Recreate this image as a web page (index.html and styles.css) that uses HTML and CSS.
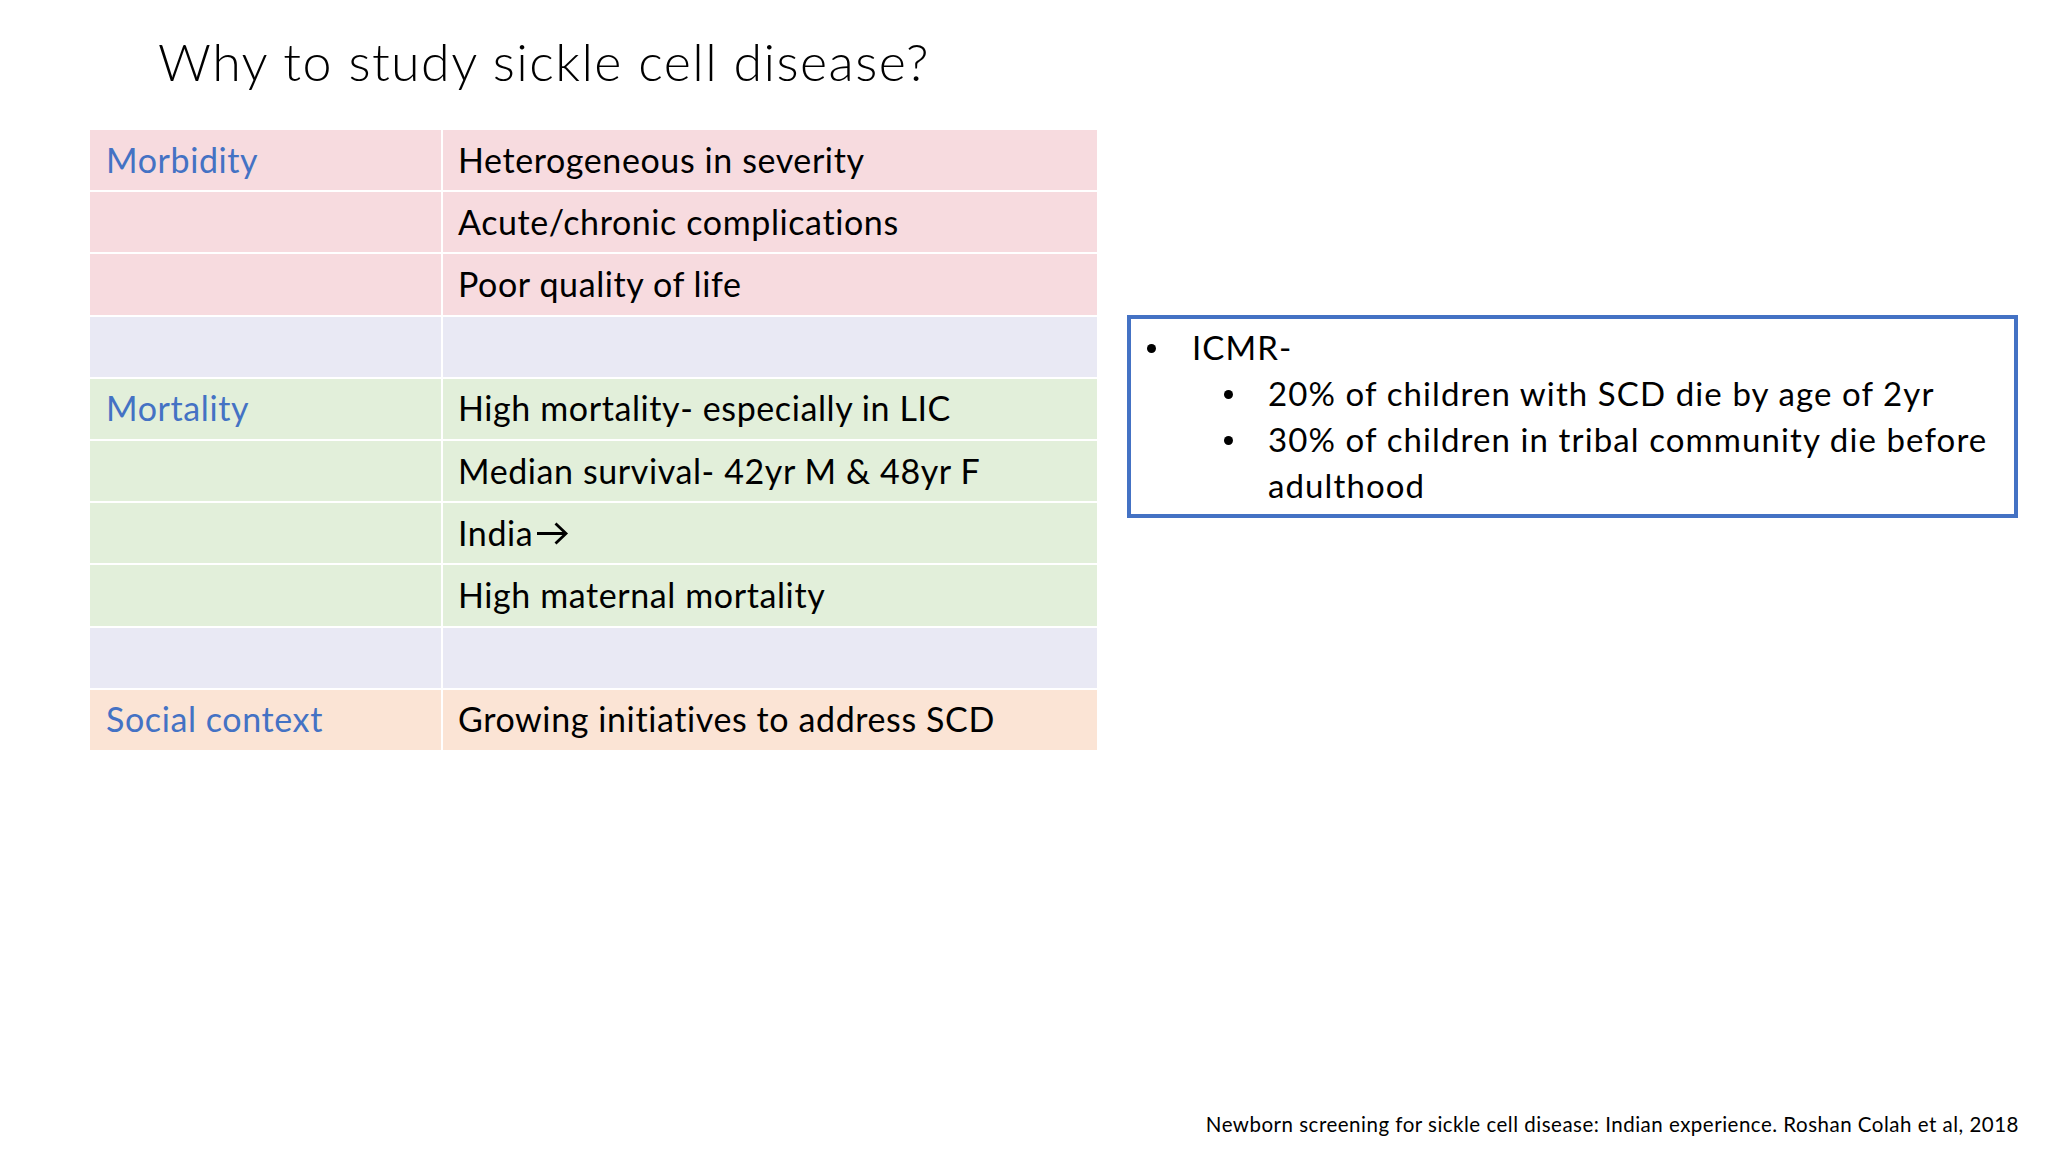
FILE: index.html
```html
<!DOCTYPE html>
<html lang="en">
<head>
<meta charset="utf-8">
<title>Why to study sickle cell disease?</title>
<link rel="stylesheet" href="styles.css">
</head>
<body>
<div class="slide">
  <h1 class="title">Why to study sickle cell disease?</h1>
  <div class="content">
    <div class="table">
      <div class="cell pink label">Morbidity</div>
      <div class="cell pink">Heterogeneous in severity</div>
      <div class="cell pink label"></div>
      <div class="cell pink">Acute/chronic complications</div>
      <div class="cell pink label"></div>
      <div class="cell pink">Poor quality of life</div>
      <div class="cell lav label"></div>
      <div class="cell lav"></div>
      <div class="cell green label">Mortality</div>
      <div class="cell green">High mortality- especially in LIC</div>
      <div class="cell green label"></div>
      <div class="cell green">Median survival- 42yr M &amp; 48yr F</div>
      <div class="cell green label"></div>
      <div class="cell green">India<svg class="arrow" width="33" height="23" viewBox="0 0 33 23" aria-hidden="true"><path d="M1 11.5H30M19.5 1.5L30 11.5L19.5 21.5" fill="none" stroke="#000" stroke-width="2.8"/></svg></div>
      <div class="cell green label"></div>
      <div class="cell green">High maternal mortality</div>
      <div class="cell lav label"></div>
      <div class="cell lav"></div>
      <div class="cell peach label">Social context</div>
      <div class="cell peach">Growing initiatives to address SCD</div>
    </div>
    <div class="box">
      <ul class="list">
        <li class="item">ICMR-
          <ul class="sublist">
            <li class="subitem">20% of children with SCD die by age of 2yr</li>
            <li class="subitem">30% of children in tribal community die before<br>adulthood</li>
          </ul>
        </li>
      </ul>
    </div>
  </div>
  <div class="footer">Newborn screening for sickle cell disease: Indian experience. Roshan Colah et al, 2018</div>
</div>
</body>
</html>
```
FILE: styles.css
```css
* { box-sizing: border-box; }
html, body { margin: 0; padding: 0; background: #fff; }
body { font-family: Lato, "Open Sans", "Liberation Sans", sans-serif; color: #000; }

.slide {
  width: 2048px;
  height: 1152px;
  display: flex;
  flex-direction: column;
  background: #fff;
}

.title {
  margin: 0;
  padding: 31px 0 0 158px;
  font-size: 52px;
  font-weight: 300;
  line-height: 60px;
  height: 130px;
  letter-spacing: 1.4px;
}

.content {
  display: flex;
  align-items: flex-start;
  padding-left: 90px;
  gap: 30px;
}

.table {
  display: grid;
  grid-template-columns: 351px 654px;
  grid-auto-rows: 60.2px;
  gap: 2px;
  width: 1007px;
}

.cell {
  display: flex;
  align-items: center;
  padding: 0 0 2px 15px;
  font-size: 34px;
  letter-spacing: 0.6px;
  color: #000;
}
.cell.label { color: #4472c4; padding-left: 16px; }

.pink { background: #f7dbdf; }
.lav { background: #e9e9f4; }
.green { background: #e2efda; }
.peach { background: #fbe4d5; }

.arrow { margin-left: 3px; margin-top: 2px; }

.box {
  margin-top: 185px;
  width: 891px;
  height: 203px;
  border: 4px solid #4472c4;
  padding: 5px 0 0 0;
}

.list, .sublist { list-style: none; margin: 0; padding: 0; }
.item, .subitem {
  position: relative;
  font-size: 33px;
  letter-spacing: 1.1px;
  line-height: 46px;
}
.item { padding-left: 61px; }
.sublist { margin-left: -1px; }
.subitem { padding-left: 77px; }
.item::before, .subitem::before {
  content: "";
  position: absolute;
  width: 9px;
  height: 9px;
  border-radius: 50%;
  background: #000;
  top: 20px;
}
.item::before { left: 16px; }
.subitem::before { left: 33px; }

.footer {
  margin-top: auto;
  align-self: flex-end;
  padding: 0 29px 16px 0;
  font-size: 20.5px;
  letter-spacing: 0.5px;
  line-height: 24px;
}
```
